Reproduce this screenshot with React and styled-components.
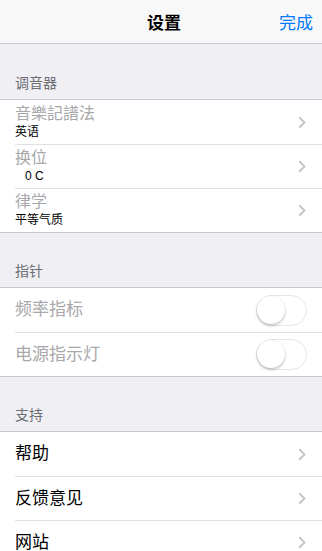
import React from 'react'
import styled, { createGlobalStyle } from 'styled-components'

const GlobalStyle = createGlobalStyle`
  html, body {
    margin: 0;
    padding: 0;
    background: #efeff4;
    overflow: hidden;
  }
  body {
    font-family: "Liberation Sans", "Noto Sans CJK SC", sans-serif;
    -webkit-font-smoothing: antialiased;
  }
`

const Screen = styled.div`
  width: 322px;
  height: 551px;
  overflow: hidden;
  background: #efeff4;
  display: flex;
  flex-direction: column;
`

const NavBar = styled.div`
  height: 43px;
  flex-shrink: 0;
  background: #f8f8f8;
  border-bottom: 1px solid #c8c7cc;
  display: grid;
  grid-template-columns: 1fr auto 1fr;
  align-items: center;
  padding: 0 9px 0 15px;
`

const NavTitle = styled.div`
  grid-column: 2;
  font-size: 17px;
  font-weight: 600;
  color: #000;
`

const NavAction = styled.div`
  grid-column: 3;
  justify-self: end;
  font-size: 17px;
  color: #007aff;
`

const SectionHeader = styled.div`
  height: ${p => p.$height}px;
  flex-shrink: 0;
  display: flex;
  align-items: flex-end;
  padding: 0 15px 7px;
  box-sizing: border-box;
  font-size: 14px;
  line-height: 17px;
  color: #6d6d72;
`

const Group = styled.div`
  background: #fff;
  border-top: 1px solid #c8c7cc;
  border-bottom: 1px solid #c8c7cc;
  flex-shrink: 0;
`

const Row = styled.div`
  height: 44px;
  display: flex;
  align-items: center;
  padding-left: 15px;
  box-sizing: border-box;
  & + & > div {
    border-top: 1px solid #e0e0e3;
  }
`

const RowInner = styled.div`
  flex: 1;
  height: 100%;
  display: flex;
  align-items: center;
  padding-right: 16px;
  box-sizing: border-box;
`

const RowText = styled.div`
  flex: 1;
  display: flex;
  flex-direction: column;
`

const RowTitle = styled.div`
  font-size: ${p => (p.$small ? 16 : 17)}px;
  line-height: ${p => (p.$small ? 18 : 20)}px;
  color: ${p => (p.$dim ? '#a8a8ab' : '#000')};
`

const RowSub = styled.div`
  margin-top: 2px;
  font-size: 12px;
  line-height: 15px;
  color: #000;
  white-space: pre;
`

const Toggle = styled.div`
  width: 51px;
  height: 31px;
  border-radius: 16px;
  border: 1.5px solid #e6e6e9;
  box-sizing: border-box;
  background: #fff;
  position: relative;
  margin-right: -1px;
`

const Knob = styled.div`
  position: absolute;
  top: 0;
  left: 0;
  width: 28px;
  height: 28px;
  border-radius: 50%;
  background: #fff;
  box-shadow: 0 2px 3px rgba(0, 0, 0, 0.2), 0 0 0 0.5px rgba(0, 0, 0, 0.08);
`

const Chevron = () => (
  <svg width="8" height="13" viewBox="0 0 8 13" style={{ flexShrink: 0 }}>
    <path d="M1.2 1.2 L6.5 6.5 L1.2 11.8" fill="none" stroke="#c7c7cc" strokeWidth="2" />
  </svg>
)

const tunerRows = [
  { title: '音樂記譜法', sub: '英语' },
  { title: '换位', sub: '   0 C' },
  { title: '律学', sub: '平等气质' },
]

export default function App() {
  return (
    <Screen>
      <GlobalStyle />
      <NavBar>
        <NavTitle>设置</NavTitle>
        <NavAction>完成</NavAction>
      </NavBar>

      <SectionHeader $height={55}>调音器</SectionHeader>
      <Group>
        {tunerRows.map(r => (
          <Row key={r.title}>
            <RowInner>
              <RowText>
                <RowTitle $small $dim>{r.title}</RowTitle>
                <RowSub>{r.sub}</RowSub>
              </RowText>
              <Chevron />
            </RowInner>
          </Row>
        ))}
      </Group>

      <SectionHeader $height={54}>指针</SectionHeader>
      <Group>
        {['频率指标', '电源指示灯'].map(t => (
          <Row key={t}>
            <RowInner>
              <RowText>
                <RowTitle $dim>{t}</RowTitle>
              </RowText>
              <Toggle>
                <Knob />
              </Toggle>
            </RowInner>
          </Row>
        ))}
      </Group>

      <SectionHeader $height={54}>支持</SectionHeader>
      <Group>
        {['帮助', '反馈意见', '网站'].map(t => (
          <Row key={t}>
            <RowInner>
              <RowText>
                <RowTitle>{t}</RowTitle>
              </RowText>
              <Chevron />
            </RowInner>
          </Row>
        ))}
      </Group>
    </Screen>
  )
}
